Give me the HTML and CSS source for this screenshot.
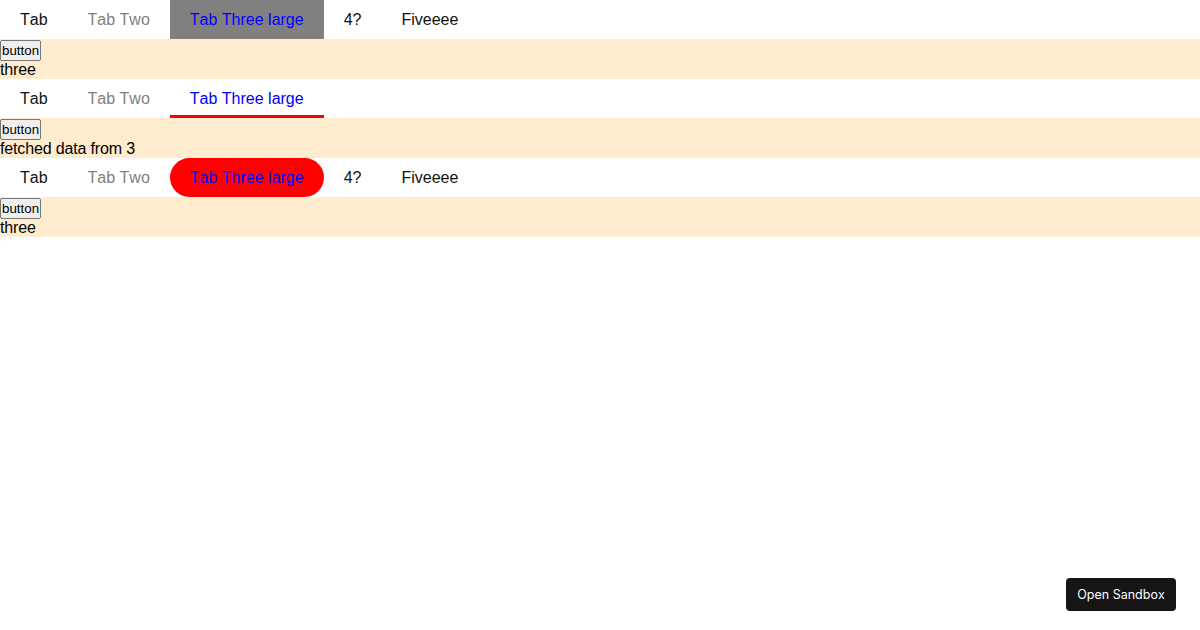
FILE: index.html
```html
<!DOCTYPE html>
<html lang="en">
<head>
  <meta charset="UTF-8">
  <title>Tabs</title>
  <link rel="stylesheet" href="styles.css">
</head>
<body>

  <!-- plain background tabs -->
  <div class="tabs tabs-bg">
    <div class="tab-list">
      <span class="tab">Tab</span>
      <span class="tab tab-disabled">Tab Two</span>
      <span class="tab tab-selected">Tab Three large</span>
      <span class="tab">4?</span>
      <span class="tab">Fiveeee</span>
    </div>
    <div class="tab-panel">
      <div><button>button</button></div>
      <div>three</div>
    </div>
  </div>

  <!-- underline tabs -->
  <div class="tabs tabs-line">
    <div class="tab-list">
      <span class="tab">Tab</span>
      <span class="tab tab-disabled">Tab Two</span>
      <span class="tab tab-selected">Tab Three large</span>
    </div>
    <div class="tab-panel">
      <div><button>button</button></div>
      <div>fetched data from 3</div>
    </div>
  </div>

  <!-- pill tabs -->
  <div class="tabs tabs-pill">
    <div class="tab-list">
      <span class="tab">Tab</span>
      <span class="tab tab-disabled">Tab Two</span>
      <span class="tab tab-selected">Tab Three large</span>
      <span class="tab">4?</span>
      <span class="tab">Fiveeee</span>
    </div>
    <div class="tab-panel">
      <div><button>button</button></div>
      <div>three</div>
    </div>
  </div>

  <a href="#" class="sandbox-btn">Open Sandbox</a>

</body>
</html>
```

FILE: styles.css
```css
body {
  margin: 0;
  font-family: "Liberation Sans", Arial, sans-serif;
  font-size: 16px;
  font-kerning: none;
  color: #000;
  background: #fff;
}

.tab-list {
  display: flex;
  height: 39px;
}

.tab {
  display: flex;
  align-items: center;
  padding: 0 20px;
  color: #111;
  cursor: pointer;
}

.tab-disabled {
  color: #808080;
}

.tab-selected {
  color: #0000ff;
}

.tabs-bg .tab-selected {
  background-color: #808080;
}

.tabs-line .tab-selected {
  box-shadow: inset 0 -3px 0 #ff0000;
}

.tabs-pill .tab-selected {
  background-color: #ff0000;
  border-radius: 20px;
}

.tab-panel {
  background-color: #ffebcd;
  height: 40px;
  letter-spacing: -0.15px;
}

.tab-panel button {
  font-family: "Liberation Sans", Arial, sans-serif;
  font-size: 13.33px;
  letter-spacing: 0;
  margin: 1px 0 0;
  padding: 2px 1px;
  border: 1px solid #767676;
  border-radius: 2px;
  background: #efefef;
  color: #000;
}

.sandbox-btn {
  position: fixed;
  right: 24px;
  bottom: 19px;
  width: 110px;
  height: 33px;
  display: flex;
  align-items: center;
  justify-content: center;
  background-color: #151515;
  color: #fff;
  font-family: Inter, "Liberation Sans", sans-serif;
  font-size: 12.5px;
  border-radius: 4px;
  text-decoration: none;
}
```
